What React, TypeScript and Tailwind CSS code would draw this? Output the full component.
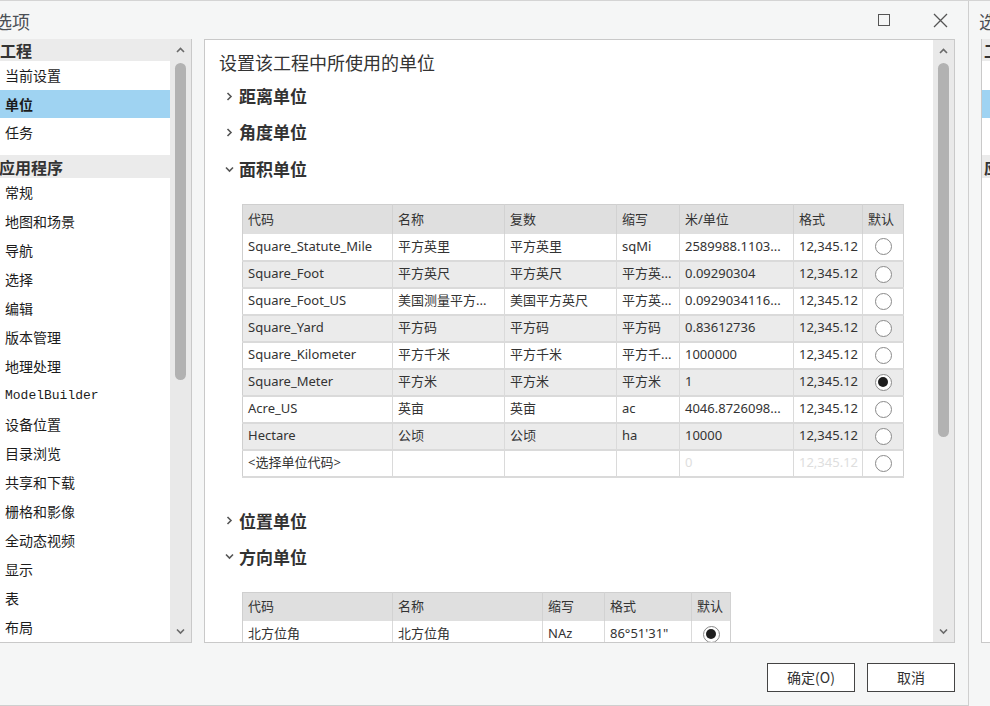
import React from "react";

const SANS = { fontFamily: '"Noto Sans", "Noto Sans CJK SC", sans-serif' };
const CJK = { fontFamily: '"Noto Sans CJK SC", sans-serif' };

type Row = { cells: string[]; selected?: boolean; faded?: boolean };

const areaCols = [150, 112, 112, 63, 114, 69, 41];
const areaHead = ["代码", "名称", "复数", "缩写", "米/单位", "格式", "默认"];
const areaRows: Row[] = [
  { cells: ["Square_Statute_Mile", "平方英里", "平方英里", "sqMi", "2589988.1103...", "12,345.12"] },
  { cells: ["Square_Foot", "平方英尺", "平方英尺", "平方英...", "0.09290304", "12,345.12"] },
  { cells: ["Square_Foot_US", "美国测量平方...", "美国平方英尺", "平方英...", "0.0929034116...", "12,345.12"] },
  { cells: ["Square_Yard", "平方码", "平方码", "平方码", "0.83612736", "12,345.12"] },
  { cells: ["Square_Kilometer", "平方千米", "平方千米", "平方千...", "1000000", "12,345.12"] },
  { cells: ["Square_Meter", "平方米", "平方米", "平方米", "1", "12,345.12"], selected: true },
  { cells: ["Acre_US", "英亩", "英亩", "ac", "4046.8726098...", "12,345.12"] },
  { cells: ["Hectare", "公顷", "公顷", "ha", "10000", "12,345.12"] },
  { cells: ["<选择单位代码>", "", "", "", "0", "12,345.12"], faded: true },
];

const dirCols = [150, 150, 62, 87, 39];
const dirHead = ["代码", "名称", "缩写", "格式", "默认"];
const dirRows: Row[] = [{ cells: ["北方位角", "北方位角", "NAz", "86°51'31\""], selected: true }];

const sideItems = [
  "常规", "地图和场景", "导航", "选择", "编辑", "版本管理", "地理处理", "ModelBuilder",
  "设备位置", "目录浏览", "共享和下载", "栅格和影像", "全动态视频", "显示", "表", "布局",
];

function Chevron({ dir, className = "" }: { dir: "up" | "down" | "right"; className?: string }) {
  const d = dir === "up" ? "M1 5 L4.5 1.5 L8 5" : dir === "down" ? "M1 1.5 L4.5 5 L8 1.5" : "M1.5 1 L5 4.5 L1.5 8";
  const w = dir === "right" ? 7 : 9;
  const h = dir === "right" ? 9 : 7;
  return (
    <svg width={w} height={h} viewBox={`0 0 ${w} ${h}`} className={className}>
      <path d={d} fill="none" stroke="currentColor" strokeWidth="1.6" />
    </svg>
  );
}

function Radio({ on }: { on?: boolean }) {
  return (
    <div className="w-[17px] h-[17px] rounded-full border border-[#8a8a8a] bg-white flex items-center justify-center mx-auto">
      {on && <div className="w-[10px] h-[10px] rounded-full bg-[#1e1e1e]" />}
    </div>
  );
}

function UnitTable({ cols, head, rows }: { cols: number[]; head: string[]; rows: Row[] }) {
  const total = cols.reduce((a, b) => a + b, 0);
  return (
    <table
      className="table-fixed border-collapse border border-[#cfcfcf] text-[13px] text-[#333]"
      style={{ ...SANS, width: total + 1 }}
    >
      <colgroup>
        {cols.map((w, i) => (
          <col key={i} style={{ width: w }} />
        ))}
      </colgroup>
      <thead>
        <tr className="h-[29px] bg-[#dfdfdf]">
          {head.map((h, i) => (
            <th key={i} className="font-normal text-left pl-[5px] border-r border-[#d2d2d2] whitespace-nowrap">
              {h}
            </th>
          ))}
        </tr>
      </thead>
      <tbody>
        {rows.map((r, ri) => (
          <tr key={ri} className={`h-[27px] ${ri % 2 === 1 ? "bg-[#ebebeb]" : "bg-white"}`}>
            {r.cells.map((c, ci) => (
              <td
                key={ci}
                className={`pl-[5px] border-r border-b-2 border-[#dadada] whitespace-nowrap overflow-hidden ${
                  r.faded && ci > 3 ? "text-[#dedede]" : ""
                }`}
              >
                {c}
              </td>
            ))}
            <td className="border-b-2 border-[#dadada]">
              <Radio on={r.selected} />
            </td>
          </tr>
        ))}
      </tbody>
    </table>
  );
}

function Section({ title, open, className = "" }: { title: string; open?: boolean; className?: string }) {
  return (
    <div className={`flex items-center ${className}`}>
      <div className="w-[20px] flex justify-center text-[#555]">
        <Chevron dir={open ? "down" : "right"} />
      </div>
      <span className="text-[17px] font-bold text-[#333]" style={CJK}>
        {title}
      </span>
    </div>
  );
}

function ScrollTrack({ thumbTop, thumbH }: { thumbTop: number; thumbH: number }) {
  return (
    <div className="w-[21px] h-full bg-[#e9e9e9] relative shrink-0">
      <div className="absolute left-0 right-0 top-[8px] flex justify-center text-[#6a6a6a]">
        <Chevron dir="up" />
      </div>
      <div
        className="absolute left-[5px] w-[11px] rounded-full bg-[#b2b2b2]"
        style={{ top: thumbTop, height: thumbH }}
      />
      <div className="absolute left-0 right-0 bottom-[7px] flex justify-center text-[#6a6a6a]">
        <Chevron dir="down" />
      </div>
    </div>
  );
}

export default function App() {
  return (
    <div className="w-[990px] h-[706px] overflow-hidden flex bg-[#f5f6f6] border-t border-[#d4d4d4]" style={CJK}>
      {/* main dialog */}
      <div className="w-[969px] shrink-0 flex flex-col border-r border-b border-[#cfcfcf]">
        {/* title bar */}
        <div className="h-[38px] flex items-center shrink-0 overflow-hidden">
          <span className="ml-[-6px] mt-[2px] text-[18px] text-[#4b4f55]">选项</span>
          <div className="ml-auto flex items-center">
            <div className="w-[12px] h-[12px] border border-[#555] mr-[43px]" />
            <svg width="15" height="15" viewBox="0 0 15 15" className="mr-[20px] text-[#555]">
              <path d="M1 1 L14 14 M14 1 L1 14" stroke="currentColor" strokeWidth="1.3" />
            </svg>
          </div>
        </div>

        <div className="flex h-[604px] shrink-0">
          {/* sidebar */}
          <div className="w-[192px] h-full flex border-r border-b border-[#c9c9c9] bg-white shrink-0">
            <div className="flex-1 overflow-hidden text-[14px] text-[#1c1c1c]">
              <div className="h-[22px] bg-[#ebebeb] flex items-center font-bold text-[16px] text-[#333]">工程</div>
              <div className="h-[29px] flex items-center pl-[5px]">当前设置</div>
              <div className="h-[28px] flex items-center pl-[5px] bg-[#9fd3f2] font-bold">单位</div>
              <div className="h-[29px] flex items-center pl-[5px]">任务</div>
              <div className="h-[8px]" />
              <div className="h-[23px] bg-[#ebebeb] flex items-center font-bold text-[16px] text-[#333] ml-[-1px]">
                应用程序
              </div>
              {sideItems.map((s) => (
                <div key={s} className="h-[29px] flex items-center pl-[5px]">
                  {s === "ModelBuilder" ? (
                    <span className="text-[13px]" style={{ fontFamily: '"Liberation Mono", monospace' }}>
                      {s}
                    </span>
                  ) : (
                    s
                  )}
                </div>
              ))}
            </div>
            <ScrollTrack thumbTop={24} thumbH={317} />
          </div>

          {/* main panel */}
          <div className="ml-[12px] w-[751px] h-full flex border border-[#c9c9c9] bg-white">
            <div className="flex-1 overflow-hidden pl-[14px] pt-[10px]">
              <div className="h-[24px] flex items-center text-[18px] text-[#333]">设置该工程中所使用的单位</div>
              <Section title="距离单位" className="mt-[4px] h-[36px]" />
              <Section title="角度单位" className="h-[36px]" />
              <Section title="面积单位" open className="h-[38px]" />
              <div className="mt-[16px] ml-[23px]">
                <UnitTable cols={areaCols} head={areaHead} rows={areaRows} />
              </div>
              <Section title="位置单位" className="mt-[25px] h-[36px]" />
              <Section title="方向单位" open className="h-[36px]" />
              <div className="mt-[17px] ml-[23px]">
                <UnitTable cols={dirCols} head={dirHead} rows={dirRows} />
              </div>
            </div>
            <ScrollTrack thumbTop={23} thumbH={374} />
          </div>
        </div>

        {/* footer */}
        <div className="flex-1 flex justify-end items-start pt-[20px] pr-[13px] gap-[12px]">
          <button className="w-[88px] h-[29px] border border-[#444] bg-white text-[14px] text-[#333]">确定(O)</button>
          <button className="w-[88px] h-[29px] border border-[#444] bg-white text-[14px] text-[#333]">取消</button>
        </div>
      </div>

      {/* second window peeking at right edge */}
      <div className="flex-1 flex flex-col overflow-hidden">
        <div className="h-[38px] flex items-center pl-[10px]">
          <span className="mt-[2px] text-[18px] text-[#4b4f55] whitespace-nowrap">选项</span>
        </div>
        <div className="ml-[12px] h-[604px] bg-white border-l border-b border-[#c9c9c9] overflow-hidden">
          <div className="h-[22px] bg-[#ebebeb] flex items-center font-bold text-[16px] text-[#333] pl-[2px] whitespace-nowrap">
            工程
          </div>
          <div className="h-[29px]" />
          <div className="h-[28px] bg-[#9fd3f2]" />
          <div className="h-[29px]" />
          <div className="h-[8px]" />
          <div className="h-[23px] bg-[#ebebeb] flex items-center font-bold text-[16px] text-[#333] pl-[2px] whitespace-nowrap">
            应用程序
          </div>
        </div>
      </div>
    </div>
  );
}
